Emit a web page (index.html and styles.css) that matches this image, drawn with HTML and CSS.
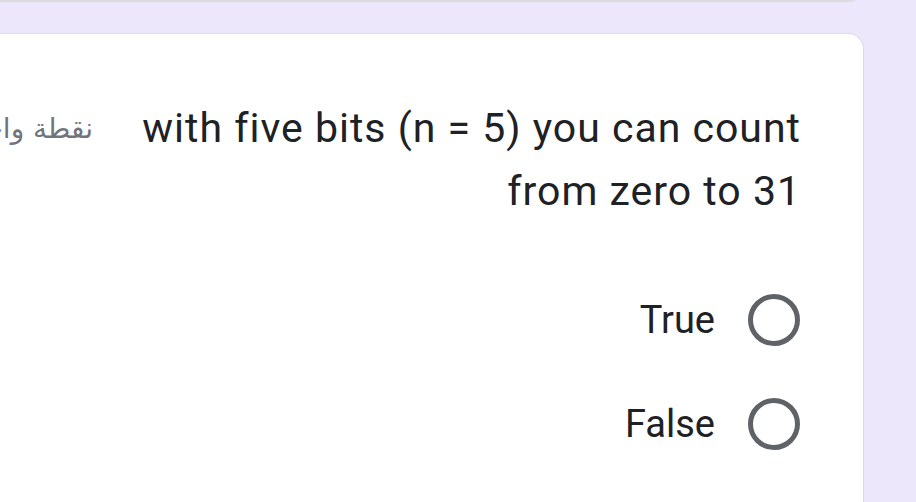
FILE: index.html
```html
<!DOCTYPE html>
<html lang="ar" dir="rtl">
<head>
  <meta charset="UTF-8">
  <meta name="viewport" content="width=device-width, initial-scale=1.0">
  <title>Question</title>
  <link rel="stylesheet" href="styles.css">
</head>
<body>
  <!-- previous card, only its bottom edge shows -->
  <div class="card card-prev"></div>

  <div class="card question-card">
    <div class="question-head">
      <div class="question-title" dir="ltr">with five bits (n = 5) you can count from zero to 31</div>
      <div class="points">نقطة واحدة</div>
    </div>

    <div class="options">
      <label class="option">
        <span class="radio"></span>
        <span class="option-label" dir="ltr">True</span>
      </label>
      <label class="option">
        <span class="radio"></span>
        <span class="option-label" dir="ltr">False</span>
      </label>
    </div>
  </div>
</body>
</html>
```

FILE: styles.css
```css
body {
  margin: 0;
  padding: 0;
  background-color: #ede7fb;
  font-family: Roboto, "DejaVu Sans", sans-serif;
  overflow: hidden;
}

.card {
  background: #ffffff;
  border: 1px solid #dadce0;
  border-radius: 16px;
  margin-right: 52px;
  margin-left: -300px;
}

.card-prev {
  height: 40px;
  margin-top: -40px;
  border-top: none;
  border-radius: 0 0 16px 16px;
  box-shadow: 0 1px 1px rgba(0, 0, 0, 0.08);
}

.question-card {
  margin-top: 32px;
  height: 600px;
  padding: 63px 62px 0 0;
  border-bottom: none;
}

.question-head {
  display: flex;
  align-items: flex-start;
  gap: 46px;
}

.question-title {
  width: 662px;
  text-align: right;
  font-size: 41px;
  letter-spacing: 1px;
  line-height: 63px;
  color: #202124;
}

.points {
  font-family: "DejaVu Sans", sans-serif;
  font-size: 28px;
  line-height: 63px;
  color: #70757a;
  white-space: nowrap;
}

.options {
  display: flex;
  flex-direction: column;
  align-items: flex-start;
  margin-top: 71px;
  margin-right: 1px;
  gap: 52px;
}

.option {
  display: flex;
  align-items: center;
  gap: 33px;
}

.radio {
  width: 42px;
  height: 42px;
  border: 5px solid #5f6368;
  border-radius: 50%;
}

.option-label {
  font-size: 38px;
  color: #202124;
}
```
